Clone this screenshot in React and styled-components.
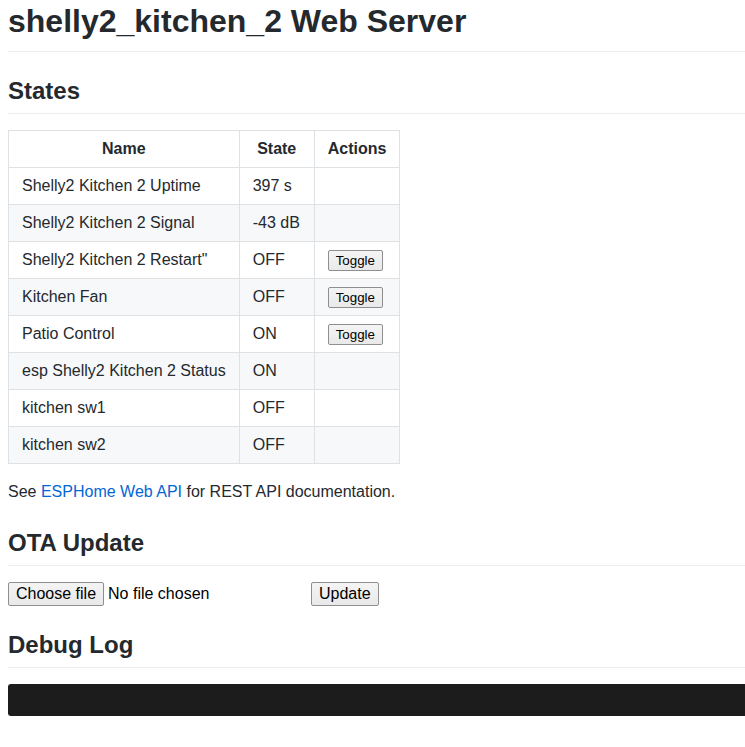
import React from 'react';
import styled, { createGlobalStyle } from 'styled-components';

const GlobalStyle = createGlobalStyle`
  html {
    overflow: hidden;
  }
  body {
    margin: 0 8px;
    padding-top: 1px;
    width: 760px;
    font-family: "Liberation Sans", Arial, sans-serif;
    font-size: 16px;
    line-height: 1.5;
    color: #24292e;
    background: #fff;
  }
`;

const Title = styled.h1`
  margin: 0 0 16px;
  padding-bottom: 0.3em;
  font-size: 32px;
  font-weight: 600;
  line-height: 1.25;
  border-bottom: 1px solid #eaecef;
`;

const Heading = styled.h2`
  margin: 24px 0 16px;
  padding-bottom: 0.3em;
  font-size: 24px;
  font-weight: 600;
  line-height: 1.25;
  border-bottom: 1px solid #eaecef;
`;

const Table = styled.table`
  border-spacing: 0;
  border-collapse: collapse;
  margin: 0 0 16px;
`;

const Row = styled.tr`
  background: ${(p) => (p.$striped ? '#f6f8fa' : '#fff')};
`;

const Th = styled.th`
  padding: 6px 13px;
  border: 1px solid #dfe2e5;
  font-weight: 600;
  text-align: center;
  min-width: ${(p) => p.$minWidth || 0}px;
`;

const Td = styled.td`
  padding: 6px 13px;
  border: 1px solid #dfe2e5;
`;

const FormButton = styled.button`
  box-sizing: border-box;
  display: inline-block;
  font-family: "Liberation Sans", Arial, sans-serif;
  font-size: ${(p) => (p.$small ? '13.33px' : '16px')};
  line-height: normal;
  height: ${(p) => (p.$small ? '21px' : '24px')};
  padding: ${(p) => (p.$small ? '1px 7px' : '2px 7px')};
  margin: 0;
  color: #000;
  background: linear-gradient(#f4f4f4, #e9e9e9);
  border: 1px solid #8f8f8f;
  border-radius: 2px;
  vertical-align: middle;
`;

const Text = styled.p`
  margin: 16px 0;
`;

const Link = styled.a`
  color: #0366d6;
  text-decoration: none;
`;

const UploadForm = styled.form`
  margin: 0;
  display: flex;
  align-items: center;
  gap: 4px;
`;

const FilePicker = styled.label`
  display: inline-flex;
  align-items: center;
  gap: 4px;
  width: 299px;
  color: #000;
  line-height: normal;
`;

const HiddenFile = styled.input`
  display: none;
`;

const Log = styled.pre`
  margin: 16px 0 0;
  padding: 16px;
  background: #1c1c1c;
  border-radius: 3px;
  font-size: 85%;
  line-height: 1.45;
  color: #fff;
`;

const rows = [
  { name: 'Shelly2 Kitchen 2 Uptime', state: '397 s' },
  { name: 'Shelly2 Kitchen 2 Signal', state: '-43 dB' },
  { name: 'Shelly2 Kitchen 2 Restart"', state: 'OFF', toggle: true },
  { name: 'Kitchen Fan', state: 'OFF', toggle: true },
  { name: 'Patio Control', state: 'ON', toggle: true },
  { name: 'esp Shelly2 Kitchen 2 Status', state: 'ON' },
  { name: 'kitchen sw1', state: 'OFF' },
  { name: 'kitchen sw2', state: 'OFF' },
];

export default function App() {
  return (
    <>
      <GlobalStyle />
      <Title>shelly2_kitchen_2 Web Server</Title>

      <Heading>States</Heading>
      <Table>
        <thead>
          <Row>
            <Th>Name</Th>
            <Th $minWidth={48}>State</Th>
            <Th>Actions</Th>
          </Row>
        </thead>
        <tbody>
          {rows.map((r, i) => (
            <Row key={r.name} $striped={i % 2 === 1}>
              <Td>{r.name}</Td>
              <Td>{r.state}</Td>
              <Td>{r.toggle && <FormButton $small>Toggle</FormButton>}</Td>
            </Row>
          ))}
        </tbody>
      </Table>

      <Text>
        See <Link href="#">ESPHome Web API</Link> for REST API documentation.
      </Text>

      <Heading>OTA Update</Heading>
      <UploadForm onSubmit={(e) => e.preventDefault()}>
        <FilePicker>
          <HiddenFile type="file" name="update" />
          <FormButton as="span">Choose file</FormButton>
          <span>No file chosen</span>
        </FilePicker>
        <FormButton type="submit">Update</FormButton>
      </UploadForm>

      <Heading>Debug Log</Heading>
      <Log></Log>
    </>
  );
}
